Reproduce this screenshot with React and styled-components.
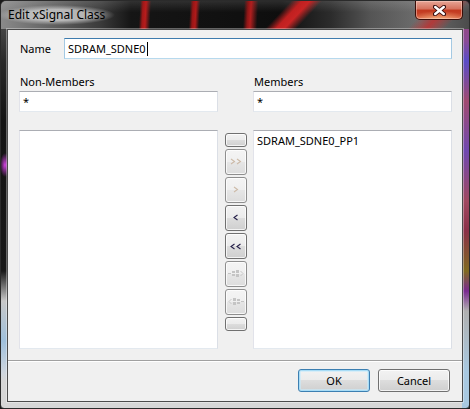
import React from 'react';
import styled, { createGlobalStyle } from 'styled-components';

const GlobalStyle = createGlobalStyle`
  html, body {
    margin: 0;
    padding: 0;
    background: #1a1a1a;
  }
  body {
    font-family: "Noto Sans", "Open Sans", sans-serif;
    font-size: 11px;
    color: #000;
  }
`;

const Window = styled.div`
  width: 470px;
  height: 409px;
  box-sizing: border-box;
  display: flex;
  flex-direction: column;
  border: 1px solid #2b2b2b;
  border-radius: 6px 6px 4px 4px;
  overflow: hidden;
  background:
    radial-gradient(5px 12px at 4px 164px, #d040e0, rgba(208, 64, 224, 0)),
    linear-gradient(180deg, #a04868 0, #8a4a96 40px, #5a4cc8 60px, #a04a70 100px, #7048b0 150px,
      #a04860 200px, #8a3048 230px, #806a20 270px, #7a2a90 290px, #b0b0b0 310px, #a8c8e0 370px)
      right 0 top 0 / 7px 100% no-repeat,
    linear-gradient(180deg, #5a5a5a 0, #2a2a2a 60px, #141414 120px, #181818 270px, #c8c8c8 300px, #9fc0dc 340px, #cfd6de 372px, #d6d6d6 380px);
`;

const TitleBar = styled.div`
  height: 28px;
  flex: none;
  display: flex;
  align-items: flex-start;
  padding-left: 7px;
  background:
    linear-gradient(133deg, rgba(0, 0, 0, 0) 212px, #c02020 220px, #c82424 226px, rgba(0, 0, 0, 0) 235px),
    linear-gradient(133deg, rgba(0, 0, 0, 0) 316px, rgba(190, 50, 50, 0.85) 330px, rgba(0, 0, 0, 0) 344px),
    linear-gradient(93deg, rgba(0, 0, 0, 0) 139px, #a01818 142px, #b81c1c 145px, rgba(0, 0, 0, 0) 150px,
      rgba(0, 0, 0, 0) 189px, #981616 192px, #b01a1a 195px, rgba(0, 0, 0, 0) 199px,
      rgba(0, 0, 0, 0) 243px, #901616 247px, #b01e1e 250px, rgba(0, 0, 0, 0) 257px),
    linear-gradient(180deg, rgba(255, 255, 255, 0.12), rgba(255, 255, 255, 0) 40%),
    linear-gradient(90deg, #8a8a8a 0, #6a6a6a 40px, #3a3a3a 100px, #151515 130px, #0e0e0e 280px,
      #2c2c2c 330px, #555 370px, #6e6e6e 420px, #4a4a4a 470px);
`;

const Title = styled.div`
  margin: 4px 0 0 -10px;
  padding: 2px 10px;
  font-size: 12px;
  line-height: 16px;
  color: #000000;
  background: radial-gradient(closest-side, rgba(200, 200, 200, 0.85) 55%, rgba(200, 200, 200, 0));
`;

const CloseButton = styled.div`
  margin-left: auto;
  margin-right: 6px;
  width: 48px;
  height: 19px;
  box-sizing: border-box;
  display: flex;
  align-items: center;
  justify-content: center;
  border: 1px solid #3a0e08;
  border-top: none;
  border-radius: 0 0 5px 5px;
  background:
    radial-gradient(30px 8px at 50% 100%, rgba(255, 200, 140, 0.7), rgba(255, 200, 140, 0)),
    linear-gradient(180deg, #e7a596 0, #d4715c 45%, #c2391f 50%, #c8442a 80%, #d8654a 100%);
  box-shadow: inset 0 0 0 1px rgba(255, 220, 210, 0.45);
`;

const Frame = styled.div`
  flex: 1;
  display: flex;
  padding: 0 6px 6px;
`;

const Client = styled.div`
  flex: 1;
  display: flex;
  flex-direction: column;
  background: #f0f0f0;
  border: 1px solid rgba(20, 20, 20, 0.75);
  box-shadow: 0 0 0 1px rgba(255, 255, 255, 0.35);
`;

const Content = styled.div`
  padding: 8px 10px 0 11px;
`;

const NameRow = styled.div`
  display: flex;
  align-items: center;
  height: 21px;
`;

const NameLabel = styled.div`
  width: 45px;
  padding-left: 1px;
  box-sizing: border-box;
  flex: none;
`;

const TextBox = styled.div`
  flex: 1;
  height: 21px;
  box-sizing: border-box;
  display: flex;
  align-items: center;
  padding: 0 3px;
  background: #fff;
  border: 1px solid;
  border-color: ${p => (p.$focused ? '#3d7bad #a4c9e3 #b7d9ed #a4c9e3' : '#abadb3 #dbdfe6 #e3e9ef #e2e3ea')};
  white-space: nowrap;
`;

const Caret = styled.span`
  display: inline-block;
  width: 1px;
  height: 14px;
  margin-left: 1px;
  background: #000;
`;

const Grid = styled.div`
  display: grid;
  grid-template-columns: 199px 35px 199px;
  grid-template-rows: 16px 21px 219px;
  margin-top: 16px;
`;

const FieldLabel = styled.div`
  grid-column: ${p => p.$col};
  line-height: 14px;
  padding-left: 1px;
  color: #000;
`;

const Cell = styled.div`
  grid-column: ${p => p.$col};
  display: flex;
`;

const ListBox = styled.div`
  grid-column: ${p => p.$col};
  margin-top: 18px;
  height: 219px;
  box-sizing: border-box;
  padding: 2px 3px;
  background: #fff;
  border: 1px solid;
  border-color: #abadb3 #dbdfe6 #e3e9ef #e2e3ea;
  line-height: 16px;
`;

const ButtonColumn = styled.div`
  grid-column: 2;
  margin-top: 21px;
  display: flex;
  flex-direction: column;
  align-items: center;
  gap: 2px;
`;

const SideButton = styled.div`
  width: 22px;
  height: ${p => (p.$small ? 14 : 27)}px;
  box-sizing: border-box;
  display: flex;
  align-items: center;
  justify-content: center;
  border: 1px solid ${p => (p.$disabled ? '#8e8e8e' : '#707070')};
  border-radius: 3px;
  background: ${p =>
    p.$disabled
      ? 'linear-gradient(180deg, #f4f4f4 0, #efefef 50%, #e6e6e6 50%, #dcdcdc 100%)'
      : 'linear-gradient(180deg, #f2f2f2 0, #ebebeb 50%, #dddddd 50%, #cfcfcf 100%)'};
  box-shadow: inset 0 0 0 1px rgba(255, 255, 255, 0.75);
`;

const Footer = styled.div`
  margin-top: auto;
  display: flex;
  justify-content: flex-end;
  gap: 8px;
  padding: 8px 12px 9px;
  border-top: 1px solid #a0a0a0;
  box-shadow: inset 0 1px 0 #fff;
`;

const DialogButton = styled.div`
  width: 72px;
  height: 23px;
  box-sizing: border-box;
  display: flex;
  align-items: center;
  justify-content: center;
  border: 1px solid ${p => (p.$default ? '#3c7fb1' : '#707070')};
  border-radius: 3px;
  background: linear-gradient(180deg, #f2f2f2 0, #ebebeb 50%, #dddddd 50%, #cfcfcf 100%);
  box-shadow: ${p =>
    p.$default
      ? 'inset 0 0 0 1px #a8dcf6, inset 0 0 0 2px rgba(200, 235, 252, 0.6)'
      : 'inset 0 0 0 1px rgba(255, 255, 255, 0.75)'};
`;

const CloseGlyph = () => (
  <svg width="13" height="11" viewBox="0 0 13 11">
    <path d="M2 1.8 L11 9.2 M11 1.8 L2 9.2" stroke="#3a1010" strokeWidth="4.2" strokeLinecap="round" />
    <path d="M2.2 2 L10.8 9 M10.8 2 L2.2 9" stroke="#fff" strokeWidth="2.4" strokeLinecap="round" />
  </svg>
);

const chevron = (x, dir) =>
  dir === 'right' ? `M${x} 1 L${x + 3.5} 3.5 L${x} 6` : `M${x + 3.5} 1 L${x} 3.5 L${x + 3.5} 6`;

const ArrowIcon = ({ dir, count, disabled }) => {
  const color = disabled ? '#cdbba8' : '#26204a';
  const w = count === 2 ? 12 : 6;
  const xs = count === 2 ? [1, 7] : [1];
  return (
    <svg width={w} height="7" viewBox={`0 0 ${w} 7`}>
      {xs.map(x => (
        <path key={x} d={chevron(x, dir)} stroke={color} strokeWidth="1.1" fill="none" />
      ))}
    </svg>
  );
};

const MoveIcon = ({ dir }) => {
  const shape = (
    <>
      <g fill="#c4c4c4">
        <rect x="0" y="3" width="3" height="1" />
        <rect x="4" y="1" width="3" height="2" />
        <rect x="4" y="4" width="3" height="2" />
        <rect x="8" y="0" width="3" height="3" />
        <rect x="8" y="4" width="3" height="3" />
      </g>
      <path d="M12.5 1 L15 3.5 L12.5 6" stroke="#c8c8c8" strokeWidth="1" fill="none" />
    </>
  );
  return (
    <svg width="16" height="8" viewBox="0 0 16 8">
      {dir === 'right' ? shape : <g transform="translate(16 0) scale(-1 1)">{shape}</g>}
    </svg>
  );
};

const App = () => (
  <>
    <GlobalStyle />
    <Window>
      <TitleBar>
        <Title>Edit xSignal Class</Title>
        <CloseButton>
          <CloseGlyph />
        </CloseButton>
      </TitleBar>
      <Frame>
        <Client>
          <Content>
            <NameRow>
              <NameLabel>Name</NameLabel>
              <TextBox $focused>
                SDRAM_SDNE0
                <Caret />
              </TextBox>
            </NameRow>
            <Grid>
              <FieldLabel $col={1}>Non-Members</FieldLabel>
              <FieldLabel $col={3}>Members</FieldLabel>
              <Cell $col={1}>
                <TextBox>*</TextBox>
              </Cell>
              <Cell $col={3}>
                <TextBox>*</TextBox>
              </Cell>
              <ListBox $col={1} />
              <ButtonColumn>
                <SideButton $small />
                <SideButton $disabled>
                  <ArrowIcon dir="right" count={2} disabled />
                </SideButton>
                <SideButton $disabled>
                  <ArrowIcon dir="right" count={1} disabled />
                </SideButton>
                <SideButton>
                  <ArrowIcon dir="left" count={1} />
                </SideButton>
                <SideButton>
                  <ArrowIcon dir="left" count={2} />
                </SideButton>
                <SideButton $disabled>
                  <MoveIcon dir="right" />
                </SideButton>
                <SideButton $disabled>
                  <MoveIcon dir="left" />
                </SideButton>
                <SideButton $small />
              </ButtonColumn>
              <ListBox $col={3}>SDRAM_SDNE0_PP1</ListBox>
            </Grid>
          </Content>
          <Footer>
            <DialogButton $default>OK</DialogButton>
            <DialogButton>Cancel</DialogButton>
          </Footer>
        </Client>
      </Frame>
    </Window>
  </>
);

export default App;
